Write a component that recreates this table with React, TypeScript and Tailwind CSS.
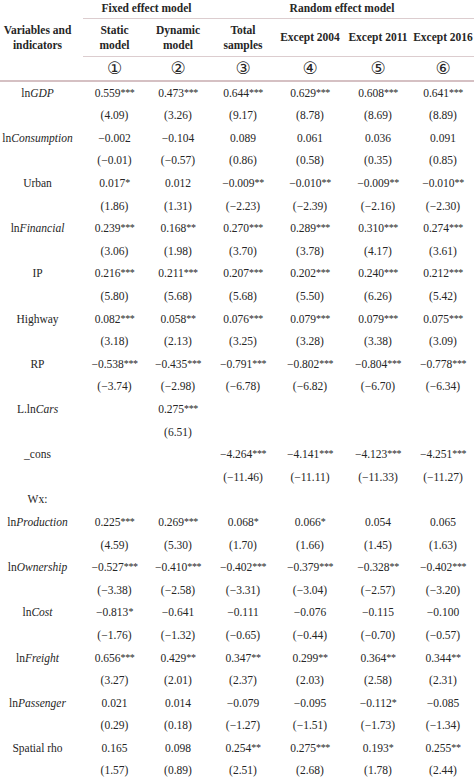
import React from "react";

const COLS = "grid grid-cols-[83px_63px_64px_66px_68px_68px_62px]";

type Row = { label?: React.ReactNode; vals: string[] };

const ln = (w: string) => (
  <>
    ln<i>{w}</i>
  </>
);

const E = ["", "", "", "", "", ""];

const rows: Row[] = [
  { label: ln("GDP"), vals: ["0.559***", "0.473***", "0.644***", "0.629***", "0.608***", "0.641***"] },
  { vals: ["(4.09)", "(3.26)", "(9.17)", "(8.78)", "(8.69)", "(8.89)"] },
  { label: ln("Consumption"), vals: ["−0.002", "−0.104", "0.089", "0.061", "0.036", "0.091"] },
  { vals: ["(−0.01)", "(−0.57)", "(0.86)", "(0.58)", "(0.35)", "(0.85)"] },
  { label: "Urban", vals: ["0.017*", "0.012", "−0.009**", "−0.010**", "−0.009**", "−0.010**"] },
  { vals: ["(1.86)", "(1.31)", "(−2.23)", "(−2.39)", "(−2.16)", "(−2.30)"] },
  { label: ln("Financial"), vals: ["0.239***", "0.168**", "0.270***", "0.289***", "0.310***", "0.274***"] },
  { vals: ["(3.06)", "(1.98)", "(3.70)", "(3.78)", "(4.17)", "(3.61)"] },
  { label: "IP", vals: ["0.216***", "0.211***", "0.207***", "0.202***", "0.240***", "0.212***"] },
  { vals: ["(5.80)", "(5.68)", "(5.68)", "(5.50)", "(6.26)", "(5.42)"] },
  { label: "Highway", vals: ["0.082***", "0.058**", "0.076***", "0.079***", "0.079***", "0.075***"] },
  { vals: ["(3.18)", "(2.13)", "(3.25)", "(3.28)", "(3.38)", "(3.09)"] },
  { label: "RP", vals: ["−0.538***", "−0.435***", "−0.791***", "−0.802***", "−0.804***", "−0.778***"] },
  { vals: ["(−3.74)", "(−2.98)", "(−6.78)", "(−6.82)", "(−6.70)", "(−6.34)"] },
  {
    label: (
      <>
        L.ln<i>Cars</i>
      </>
    ),
    vals: ["", "0.275***", "", "", "", ""],
  },
  { vals: ["", "(6.51)", "", "", "", ""] },
  { label: "_cons", vals: ["", "", "−4.264***", "−4.141***", "−4.123***", "−4.251***"] },
  { vals: ["", "", "(−11.46)", "(−11.11)", "(−11.33)", "(−11.27)"] },
  { label: "Wx:", vals: E },
  { label: ln("Production"), vals: ["0.225***", "0.269***", "0.068*", "0.066*", "0.054", "0.065"] },
  { vals: ["(4.59)", "(5.30)", "(1.70)", "(1.66)", "(1.45)", "(1.63)"] },
  { label: ln("Ownership"), vals: ["−0.527***", "−0.410***", "−0.402***", "−0.379***", "−0.328**", "−0.402***"] },
  { vals: ["(−3.38)", "(−2.58)", "(−3.31)", "(−3.04)", "(−2.57)", "(−3.20)"] },
  { label: ln("Cost"), vals: ["−0.813*", "−0.641", "−0.111", "−0.076", "−0.115", "−0.100"] },
  { vals: ["(−1.76)", "(−1.32)", "(−0.65)", "(−0.44)", "(−0.70)", "(−0.57)"] },
  { label: ln("Freight"), vals: ["0.656***", "0.429**", "0.347**", "0.299**", "0.364**", "0.344**"] },
  { vals: ["(3.27)", "(2.01)", "(2.37)", "(2.03)", "(2.58)", "(2.31)"] },
  { label: ln("Passenger"), vals: ["0.021", "0.014", "−0.079", "−0.095", "−0.112*", "−0.085"] },
  { vals: ["(0.29)", "(0.18)", "(−1.27)", "(−1.51)", "(−1.73)", "(−1.34)"] },
  { label: "Spatial rho", vals: ["0.165", "0.098", "0.254**", "0.275***", "0.193*", "0.255**"] },
  { vals: ["(1.57)", "(0.89)", "(2.51)", "(2.68)", "(1.78)", "(2.44)"] },
];

function Val({ v }: { v: string }) {
  const m = v.match(/^([^*]*)(\**)$/);
  const num = m ? m[1] : v;
  const stars = m ? m[2] : "";
  return (
    <span className="whitespace-nowrap">
      {num}
      {stars && <span className="relative -top-[1px] text-[10px] tracking-[-0.4px]">{stars}</span>}
    </span>
  );
}

const circ = ["①", "②", "③", "④", "⑤", "⑥"];

export default function App() {
  return (
    <div className="w-[474px] h-[780px] overflow-hidden bg-white text-[#262626] text-[11.5px] font-['Liberation_Serif','Times_New_Roman',serif]">
      <div className={`${COLS} grid-rows-[19px_38px_23px] border-b-2 border-[#d5c0c3] font-bold leading-[15px]`}>
        <div className="col-start-1 row-start-1" />
        <div className="col-start-2 col-span-2 row-start-1 flex items-center justify-center border-b border-[#dccdcf] pb-[2px]">
          Fixed effect model
        </div>
        <div className="col-start-4 col-span-4 row-start-1 flex items-center justify-center border-b border-[#dccdcf] pb-[2px]">
          Random effect model
        </div>
        <div className="col-start-1 row-start-2 flex items-center justify-center pr-2 text-center">
          Variables and
          <br />
          indicators
        </div>
        {[
          ["Static", "model"],
          ["Dynamic", "model"],
          ["Total", "samples"],
          ["Except 2004"],
          ["Except 2011"],
          ["Except 2016"],
        ].map((t, i) => (
          <div
            key={i}
            className="row-start-2 flex flex-col items-center justify-center border-b border-[#dccdcf] text-center whitespace-nowrap"
          >
            {t.map((s, j) => (
              <span key={j}>{s}</span>
            ))}
          </div>
        ))}
        <div className="col-start-1 row-start-3" />
        {circ.map((c, i) => (
          <div
            key={i}
            className="row-start-3 flex items-center justify-center font-normal text-[17px] leading-none font-['DejaVu_Sans',sans-serif]"
          >
            {c}
          </div>
        ))}
      </div>
      <div className="flex flex-col">
        {rows.map((r, i) => (
          <div key={i} className={`${COLS} h-[22.6px] items-center`}>
            <div className="flex justify-center pr-2 whitespace-nowrap">{r.label ?? ""}</div>
            {r.vals.map((v, j) => (
              <div key={j} className="flex justify-center">
                <Val v={v} />
              </div>
            ))}
          </div>
        ))}
      </div>
    </div>
  );
}
